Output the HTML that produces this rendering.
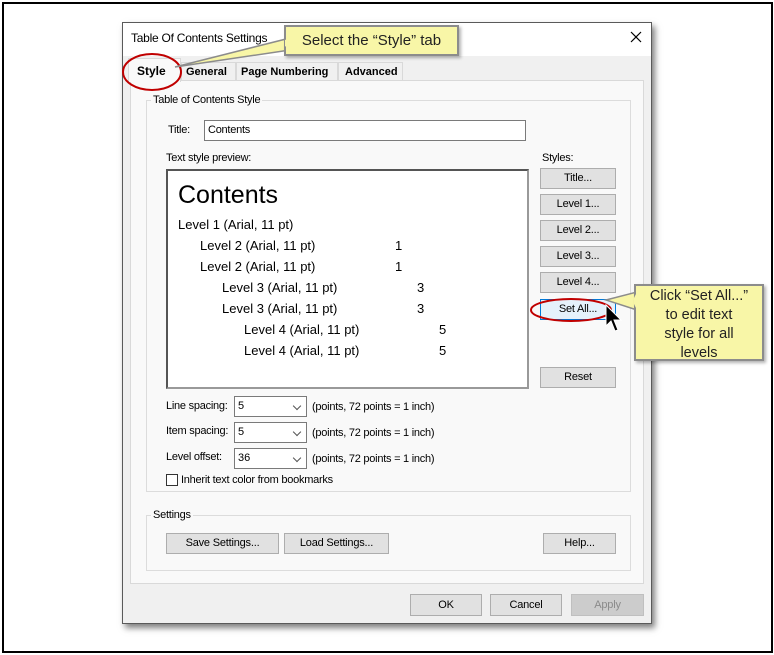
<!DOCTYPE html>
<html><head><style>
*{margin:0;padding:0;box-sizing:border-box}
body{width:774px;height:655px;background:#fff;position:relative;overflow:hidden;font-family:"Liberation Sans",Arial,sans-serif;font-size:11px;color:#000}
.a{position:absolute;white-space:nowrap}
.s{letter-spacing:-0.25px}
.btn{position:absolute;background:#e1e1e1;border:1px solid #adadad;text-align:center;font-size:11px;line-height:19px;height:21px;letter-spacing:-0.2px}
.grp{position:absolute;border:1px solid #dcdcdc}
.sel{position:absolute;background:#fff;border:1px solid #7a7a7a;height:21px;width:73px;font-size:11px;line-height:19px;padding-left:3px}
.sel:after{content:"";position:absolute;right:6px;top:6px;width:5px;height:5px;border-right:1px solid #555;border-bottom:1px solid #555;transform:rotate(45deg)}
.pv{position:absolute;font-size:13px;white-space:nowrap}
.call{position:absolute;background:#f8f6a7;border:2px solid #8c8c8c;text-align:center;font-size:15px;color:#222;box-shadow:2px 2px 3px rgba(0,0,0,.3)}
</style></head><body>
<div class="a" style="left:2px;top:2px;width:771px;height:651px;border:2px solid #000"></div>
<div class="a" style="left:122px;top:22px;width:530px;height:602px;background:#f0f0f0;border:1px solid #5a5a5a;box-shadow:3px 4px 6px rgba(0,0,0,.5)"></div>
<div class="a" style="left:123px;top:23px;width:528px;height:33px;background:#fff"></div>
<div class="a s" style="left:131px;top:31px;font-size:12px">Table Of Contents Settings</div>
<svg class="a" style="left:630px;top:31px" width="12" height="12"><path d="M1 1L11 11M11 1L1 11" stroke="#000" stroke-width="1.2"/></svg>
<!-- tabs -->
<div class="a" style="left:130px;top:80px;width:514px;height:504px;background:#f9f9f9;border:1px solid #d9d9d9"></div>
<div class="a" style="left:181px;top:62px;width:55px;height:19px;background:#f0f0f0;border:1px solid #d9d9d9;font-weight:bold;font-size:11px;padding:3px 0 0 4px">General</div>
<div class="a" style="left:236px;top:62px;width:102px;height:19px;background:#f0f0f0;border:1px solid #d9d9d9;font-weight:bold;font-size:11px;padding:3px 0 0 4px">Page Numbering</div>
<div class="a" style="left:338px;top:62px;width:65px;height:19px;background:#f0f0f0;border:1px solid #d9d9d9;font-weight:bold;font-size:11px;padding:3px 0 0 6px">Advanced</div>
<div class="a" style="left:128px;top:58px;width:53px;height:24px;background:#f9f9f9;border:1px solid #d9d9d9;border-bottom:none;font-weight:bold;font-size:12px;padding:5px 0 0 8px">Style</div>
<!-- group -->
<div class="grp" style="left:146px;top:100px;width:485px;height:392px"></div>
<div class="a s" style="left:151px;top:94px;background:#f9f9f9;padding:0 2px;font-size:11px">Table of Contents Style</div>
<div class="a s" style="left:168px;top:124px">Title:</div>
<div class="a s" style="left:204px;top:120px;width:322px;height:21px;background:#fff;border:1px solid #7a7a7a;padding:3px 3px">Contents</div>
<div class="a s" style="left:166px;top:152px">Text style preview:</div>
<div class="a s" style="left:542px;top:152px">Styles:</div>
<div class="a" style="left:166px;top:169px;width:363px;height:220px;background:#fff;border:2px solid #555;border-right-color:#999;border-bottom-color:#999"></div>
<div class="pv" style="left:178px;top:181px;font-size:25px">Contents</div>
<div class="pv" style="left:178px;top:217px">Level 1 (Arial, 11 pt)</div>
<div class="pv" style="left:200px;top:238px">Level 2 (Arial, 11 pt)</div><div class="pv" style="left:395px;top:238px">1</div>
<div class="pv" style="left:200px;top:259px">Level 2 (Arial, 11 pt)</div><div class="pv" style="left:395px;top:259px">1</div>
<div class="pv" style="left:222px;top:280px">Level 3 (Arial, 11 pt)</div><div class="pv" style="left:417px;top:280px">3</div>
<div class="pv" style="left:222px;top:301px">Level 3 (Arial, 11 pt)</div><div class="pv" style="left:417px;top:301px">3</div>
<div class="pv" style="left:244px;top:322px">Level 4 (Arial, 11 pt)</div><div class="pv" style="left:439px;top:322px">5</div>
<div class="pv" style="left:244px;top:343px">Level 4 (Arial, 11 pt)</div><div class="pv" style="left:439px;top:343px">5</div>
<div class="btn" style="left:540px;top:168px;width:76px">Title...</div>
<div class="btn" style="left:540px;top:194px;width:76px">Level 1...</div>
<div class="btn" style="left:540px;top:220px;width:76px">Level 2...</div>
<div class="btn" style="left:540px;top:246px;width:76px">Level 3...</div>
<div class="btn" style="left:540px;top:272px;width:76px">Level 4...</div>
<div class="btn" style="left:540px;top:299px;width:76px;background:#e5f1fb;border-color:#0078d7">Set All...</div>
<div class="btn" style="left:540px;top:367px;width:76px">Reset</div>
<div class="a s" style="left:166px;top:400px">Line spacing:</div><div class="sel" style="left:234px;top:396px">5</div><div class="a s" style="left:312px;top:401px">(points, 72 points = 1 inch)</div>
<div class="a s" style="left:166px;top:425px">Item spacing:</div><div class="sel" style="left:234px;top:422px">5</div><div class="a s" style="left:312px;top:427px">(points, 72 points = 1 inch)</div>
<div class="a s" style="left:166px;top:451px">Level offset:</div><div class="sel" style="left:234px;top:448px">36</div><div class="a s" style="left:312px;top:453px">(points, 72 points = 1 inch)</div>
<div class="a" style="left:166px;top:474px;width:12px;height:12px;border:1px solid #333;background:#fff"></div>
<div class="a s" style="left:181px;top:474px">Inherit text color from bookmarks</div>
<div class="grp" style="left:146px;top:515px;width:485px;height:56px"></div>
<div class="a s" style="left:151px;top:509px;background:#f9f9f9;padding:0 2px">Settings</div>
<div class="btn" style="left:166px;top:533px;width:113px">Save Settings...</div>
<div class="btn" style="left:284px;top:533px;width:105px">Load Settings...</div>
<div class="btn" style="left:543px;top:533px;width:73px">Help...</div>
<div class="btn" style="left:410px;top:594px;width:72px;height:22px;line-height:20px">OK</div>
<div class="btn" style="left:490px;top:594px;width:72px;height:22px;line-height:20px">Cancel</div>
<div class="btn" style="left:571px;top:594px;width:73px;height:22px;line-height:20px;color:#8a8a8a;background:#ccc;border-color:#bfbfbf">Apply</div>
<!-- annotations -->
<svg class="a" style="left:0;top:0" width="774" height="655">
<ellipse cx="152" cy="72" rx="29" ry="18" fill="none" stroke="#c00000" stroke-width="2"/>
<ellipse cx="571" cy="310" rx="40" ry="11" fill="none" stroke="#c00000" stroke-width="2"/>
<polygon points="175,67 290,38 290,50" fill="#f8f6a7" stroke="#8c8c8c" stroke-width="1.5"/>
<polygon points="606,300 637,292 637,310" fill="#f8f6a7" stroke="#8c8c8c" stroke-width="1.5"/>
<path d="M606 305 L606 326 L611 321 L615 331 L618 330 L614 320 L621 320 Z" fill="#000" stroke="#fff" stroke-width="1"/>
</svg>
<div class="call" style="left:284px;top:25px;width:175px;height:31px;line-height:27px">Select the “Style” tab</div>
<div class="call" style="left:634px;top:284px;width:130px;height:77px;line-height:19px;padding-top:1px;font-size:14.5px">Click “Set All...”<br>to edit text<br>style for all<br>levels</div>
<svg class="a" style="left:0;top:0" width="774" height="655"><polygon points="285,40 290,38 290,50 285,46" fill="#f8f6a7"/><polygon points="634,298 637,292 637,310 634,304" fill="#f8f6a7"/></svg>
</body></html>
